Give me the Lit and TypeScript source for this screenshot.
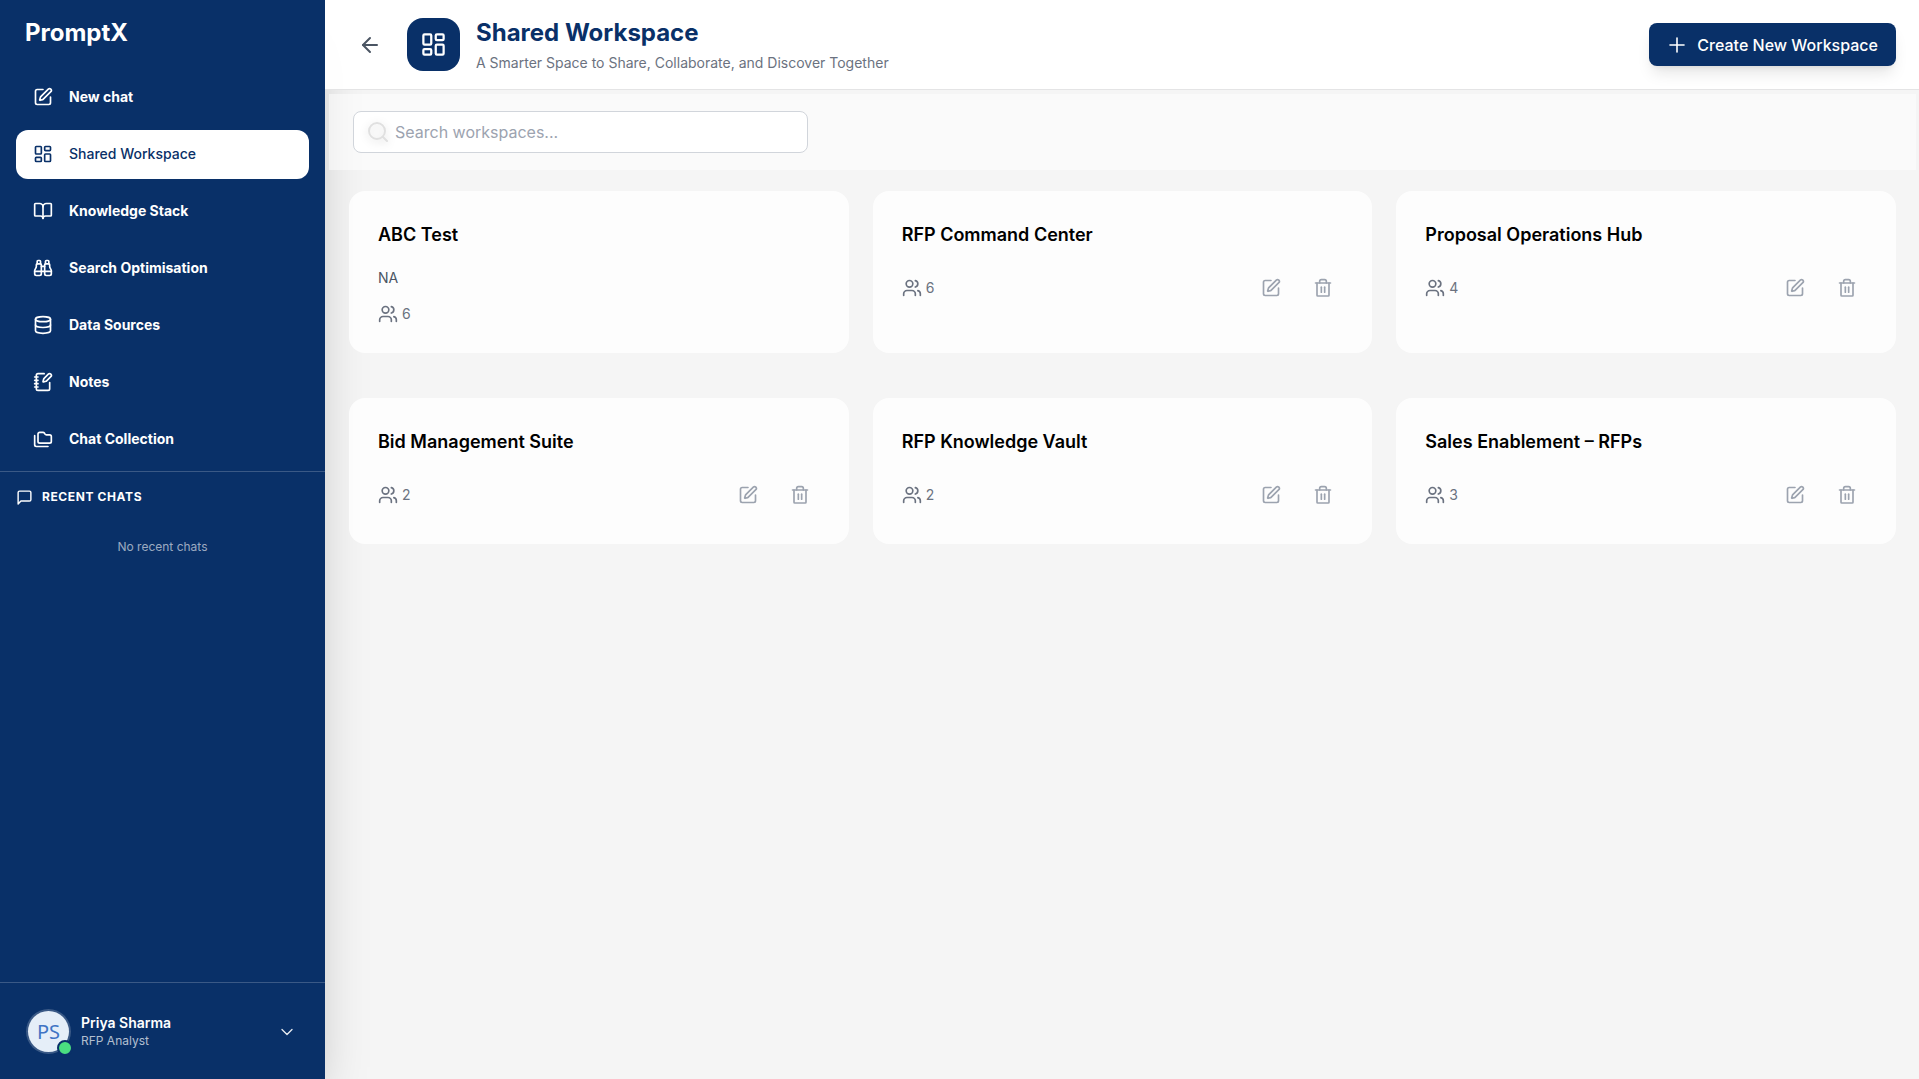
import { LitElement, html, css, svg, nothing, type SVGTemplateResult } from "lit";
import { customElement, property, state } from "lit/decorators.js";
import { classMap } from "lit/directives/class-map.js";

const ICONS: Record<string, SVGTemplateResult> = {
  edit: svg`<path d="M12 3H5a2 2 0 0 0-2 2v14a2 2 0 0 0 2 2h14a2 2 0 0 0 2-2v-7"/><path d="M18.375 2.625a1 1 0 0 1 3 3l-9.013 9.014a2 2 0 0 1-.853.505l-2.873.84a.5.5 0 0 1-.62-.62l.84-2.873a2 2 0 0 1 .506-.852z"/>`,
  dashboard: svg`<rect width="7" height="9" x="3" y="3" rx="1"/><rect width="7" height="5" x="14" y="3" rx="1"/><rect width="7" height="9" x="14" y="12" rx="1"/><rect width="7" height="5" x="3" y="16" rx="1"/>`,
  book: svg`<path d="M12 7v14"/><path d="M3 18a1 1 0 0 1-1-1V4a1 1 0 0 1 1-1h5a4 4 0 0 1 4 4 4 4 0 0 1 4-4h5a1 1 0 0 1 1 1v13a1 1 0 0 1-1 1h-6a3 3 0 0 0-3 3 3 3 0 0 0-3-3z"/>`,
  binoculars: svg`<path d="M10 10h4"/><path d="M19 7V4a1 1 0 0 0-1-1h-2a1 1 0 0 0-1 1v3"/><path d="M20 21a2 2 0 0 0 2-2v-3.851c0-1.39-2-2.962-2-4.829V8a1 1 0 0 0-1-1h-4a1 1 0 0 0-1 1v11a2 2 0 0 0 2 2z"/><path d="M22 16H2"/><path d="M4 21a2 2 0 0 1-2-2v-3.851c0-1.39 2-2.962 2-4.829V8a1 1 0 0 1 1-1h4a1 1 0 0 1 1 1v11a2 2 0 0 1-2 2z"/><path d="M9 7V4a1 1 0 0 0-1-1H6a1 1 0 0 0-1 1v3"/>`,
  database: svg`<ellipse cx="12" cy="5" rx="9" ry="3"/><path d="M3 5V19A9 3 0 0 0 21 19V5"/><path d="M3 12A9 3 0 0 0 21 12"/>`,
  notebook: svg`<path d="M13.4 2H6a2 2 0 0 0-2 2v16a2 2 0 0 0 2 2h12a2 2 0 0 0 2-2v-7.4"/><path d="M2 6h4"/><path d="M2 10h4"/><path d="M2 14h4"/><path d="M2 18h4"/><path d="M21.378 5.626a1 1 0 1 0-3.004-3.004l-5.01 5.012a2 2 0 0 0-.506.854l-.837 2.87a.5.5 0 0 0 .62.62l2.87-.837a2 2 0 0 0 .854-.506z"/>`,
  folders: svg`<path d="M20 17a2 2 0 0 0 2-2V9a2 2 0 0 0-2-2h-3.9a2 2 0 0 1-1.69-.9l-.81-1.2a2 2 0 0 0-1.67-.9H8a2 2 0 0 0-2 2v9a2 2 0 0 0 2 2Z"/><path d="M2 8v11a2 2 0 0 0 2 2h14"/>`,
  message: svg`<path d="M21 15a2 2 0 0 1-2 2H7l-4 4V5a2 2 0 0 1 2-2h14a2 2 0 0 1 2 2z"/>`,
  chevron: svg`<path d="m6 9 6 6 6-6"/>`,
  back: svg`<path d="m12 19-7-7 7-7"/><path d="M19 12H5"/>`,
  plus: svg`<path d="M5 12h14"/><path d="M12 5v14"/>`,
  search: svg`<circle cx="11" cy="11" r="8"/><path d="m21 21-4.3-4.3"/>`,
  users: svg`<path d="M16 21v-2a4 4 0 0 0-4-4H6a4 4 0 0 0-4 4v2"/><circle cx="9" cy="7" r="4"/><path d="M22 21v-2a4 4 0 0 0-3-3.87"/><path d="M16 3.13a4 4 0 0 1 0 7.75"/>`,
  trash: svg`<path d="M3 6h18"/><path d="M19.2 6v14.6a1 1 0 0 1-1 1H5.8a1 1 0 0 1-1-1V6"/><path d="M8 6V4a2 2 0 0 1 2-2h4a2 2 0 0 1 2 2v2"/><path d="M10 11v6"/><path d="M14 11v6"/>`,
};

@customElement("px-icon")
export class PxIcon extends LitElement {
  @property() name = "";
  static styles = css`
    :host {
      display: inline-flex;
      flex: none;
      width: 20px;
      height: 20px;
    }
    .glyph {
      width: 100%;
      height: 100%;
      fill: none;
      stroke: currentColor;
      stroke-width: var(--stroke, 2);
      stroke-linecap: round;
      stroke-linejoin: round;
    }
  `;
  render() {
    return html`<svg class="glyph" viewBox="0 0 24 24" aria-hidden="true">${ICONS[this.name]}</svg>`;
  }
}

const NAV = [
  { label: "New chat", icon: "edit" },
  { label: "Shared Workspace", icon: "dashboard", active: true },
  { label: "Knowledge Stack", icon: "book" },
  { label: "Search Optimisation", icon: "binoculars" },
  { label: "Data Sources", icon: "database" },
  { label: "Notes", icon: "notebook" },
  { label: "Chat Collection", icon: "folders" },
];

@customElement("px-sidebar")
export class PxSidebar extends LitElement {
  static styles = css`
    :host {
      display: flex;
      flex-direction: column;
      background: #093068;
      color: #fff;
      box-shadow: 0 25px 50px -12px rgba(0, 0, 0, 0.25);
    }
    .brand {
      padding: 17px 25px 15px;
      font-size: 24px;
      line-height: 32px;
      font-weight: 700;
    }
    .nav {
      display: flex;
      flex-direction: column;
      gap: 8px;
      padding: 9px 16px 7px;
      border-bottom: 1px solid rgba(255, 255, 255, 0.2);
    }
    .item {
      display: flex;
      align-items: center;
      gap: 16px;
      box-sizing: border-box;
      height: 49px;
      padding: 0 17px 2px;
      border-radius: 12px;
      color: #fff;
      font-size: 14px;
      font-weight: 700;
      text-decoration: none;
    }
    .active {
      background: #fff;
      color: #093068;
      font-weight: 500;
    }
    .recent {
      flex: 1;
      padding: 16px;
    }
    .heading {
      display: flex;
      align-items: center;
      gap: 9px;
      margin: 0;
      font-size: 12px;
      line-height: 18px;
      font-weight: 700;
      letter-spacing: 0.05em;
    }
    .heading px-icon {
      width: 17px;
      height: 17px;
    }
    .empty {
      margin: 32px 0 0;
      text-align: center;
      font-size: 12px;
      line-height: 18px;
      color: rgba(255, 255, 255, 0.6);
    }
    .user {
      display: flex;
      align-items: center;
      gap: 12px;
      padding: 25px 28px 24px;
      border: 0;
      border-top: 1px solid rgba(255, 255, 255, 0.2);
      background: none;
      color: inherit;
      font: inherit;
      text-align: left;
    }
    .avatar {
      position: relative;
      display: grid;
      place-items: center;
      width: 41px;
      height: 41px;
      margin: 3px 0;
      border-radius: 50%;
      background: #e5eef8;
      box-shadow: 0 0 0 2px rgba(255, 255, 255, 0.2);
      color: #3f74c4;
      font-family: "Noto Sans", sans-serif;
      font-size: 20px;
    }
    .status {
      position: absolute;
      right: -4px;
      bottom: -4px;
      width: 12px;
      height: 12px;
      border: 2px solid #093068;
      border-radius: 50%;
      background: #4ade80;
    }
    .who {
      flex: 1;
      display: flex;
      flex-direction: column;
    }
    .name {
      font-size: 14px;
      line-height: 18px;
      font-weight: 600;
    }
    .role {
      font-size: 12px;
      line-height: 18px;
      color: rgba(255, 255, 255, 0.7);
    }
    .user > px-icon {
      --stroke: 1.6;
      color: rgba(255, 255, 255, 0.9);
    }
  `;
  render() {
    return html`
      <div class="brand">PromptX</div>
      <nav class="nav">
        ${NAV.map(
          (n) => html`<a class=${classMap({ item: true, active: !!n.active })} href="#" aria-current=${n.active ? "page" : nothing}>
            <px-icon name=${n.icon}></px-icon>${n.label}
          </a>`
        )}
      </nav>
      <section class="recent">
        <h2 class="heading"><px-icon name="message"></px-icon>RECENT CHATS</h2>
        <p class="empty">No recent chats</p>
      </section>
      <button class="user" type="button">
        <span class="avatar">PS<span class="status"></span></span>
        <span class="who"><span class="name">Priya Sharma</span><span class="role">RFP Analyst</span></span>
        <px-icon name="chevron"></px-icon>
      </button>
    `;
  }
}

interface Workspace {
  title: string;
  members: number;
  note?: string;
  editable: boolean;
}

@customElement("px-card")
export class PxCard extends LitElement {
  @property({ attribute: false }) item!: Workspace;
  static styles = css`
    :host {
      display: block;
      padding: 29px 31px 29px 29px;
      border-radius: 16px;
      background: rgba(255, 255, 255, 0.8);
    }
    .title {
      margin: 0;
      font-size: 18px;
      line-height: 30px;
      font-weight: 600;
      color: #000;
    }
    .note {
      margin: 16px 0 0;
      font-size: 14px;
      line-height: 24px;
      color: #4b5563;
    }
    .row {
      display: flex;
      align-items: center;
      justify-content: space-between;
      margin-top: 18px;
      min-height: 40px;
    }
    .note + .row {
      margin-top: 14px;
      min-height: 20px;
    }
    .members {
      display: flex;
      align-items: center;
      gap: 4px;
      font-size: 14px;
      line-height: 20px;
      color: #6b7280;
    }
    .actions {
      display: flex;
      gap: 16px;
    }
    .action {
      display: grid;
      place-items: center;
      width: 36px;
      height: 36px;
      padding: 0;
      border: 0;
      background: none;
      color: #9ca3af;
    }
  `;
  render() {
    const w = this.item;
    return html`
      <h2 class="title">${w.title}</h2>
      ${w.note ? html`<p class="note">${w.note}</p>` : nothing}
      <div class="row">
        <span class="members"><px-icon name="users"></px-icon>${w.members}</span>
        ${w.editable
          ? html`<span class="actions">
              <button class="action" type="button" aria-label="Edit ${w.title}"><px-icon name="edit"></px-icon></button>
              <button class="action" type="button" aria-label="Delete ${w.title}"><px-icon name="trash"></px-icon></button>
            </span>`
          : nothing}
      </div>
    `;
  }
}

@customElement("app-root")
export class AppRoot extends LitElement {
  @state() private query = "";
  private items: Workspace[] = [
    { title: "ABC Test", members: 6, note: "NA", editable: false },
    { title: "RFP Command Center", members: 6, editable: true },
    { title: "Proposal Operations Hub", members: 4, editable: true },
    { title: "Bid Management Suite", members: 2, editable: true },
    { title: "RFP Knowledge Vault", members: 2, editable: true },
    { title: "Sales Enablement – RFPs", members: 3, editable: true },
  ];
  static styles = css`
    :host {
      display: grid;
      grid-template-columns: 325px minmax(0, 1fr);
      min-height: 100vh;
      background: #f5f5f5;
      font-family: Inter, "Liberation Sans", sans-serif;
    }
    .main {
      position: relative;
      min-width: 0;
    }
    .top {
      display: flex;
      align-items: center;
      gap: 16px;
      height: 89px;
      padding: 0 23px 0 24px;
      border-bottom: 1px solid #e4e4e5;
      background: rgba(255, 255, 255, 0.95);
    }
    .back {
      display: grid;
      place-items: center;
      width: 42px;
      height: 42px;
      padding: 0;
      border: 0;
      background: none;
      color: #4b5563;
    }
    .back px-icon,
    .create px-icon,
    .glass {
      width: 24px;
      height: 24px;
    }
    .badge {
      display: grid;
      place-items: center;
      width: 53px;
      height: 53px;
      border-radius: 16px;
      background: #093068;
      color: #fff;
    }
    .badge px-icon {
      width: 27px;
      height: 27px;
    }
    .titles {
      flex: 1;
    }
    .title {
      margin: 0;
      font-size: 24px;
      line-height: 32px;
      font-weight: 700;
      color: #093068;
    }
    .sub {
      margin: 4px 0 0;
      font-size: 14px;
      line-height: 20px;
      color: #6b7280;
    }
    .create {
      display: flex;
      align-items: center;
      gap: 8px;
      height: 43px;
      padding: 0 18px 0 16px;
      border: 0;
      border-radius: 8px;
      background: #093068;
      box-shadow: 0 10px 15px -3px rgba(0, 0, 0, 0.1), 0 4px 6px -4px rgba(0, 0, 0, 0.1);
      color: #fff;
      font: 500 16px/24px Inter, sans-serif;
    }
    .create px-icon {
      --stroke: 1.6;
    }
    .bar {
      margin: 4px 3px 0 4px;
      padding: 17px 24px;
      background: rgba(255, 255, 255, 0.5);
    }
    .field {
      display: flex;
      align-items: center;
      gap: 5px;
      box-sizing: border-box;
      width: 455px;
      max-width: 100%;
      height: 42px;
      padding: 0 12px;
      border: 1px solid #d1d5db;
      border-radius: 8px;
      background: #fff;
    }
    .glass {
      color: #e0e0e0;
      filter: drop-shadow(0 2px 4px rgba(0, 0, 0, 0.16));
    }
    .input {
      flex: 1;
      min-width: 0;
      padding: 0;
      border: 0;
      outline: 0;
      background: none;
      font: 400 16px/24px Inter, sans-serif;
      color: #111827;
    }
    .input::placeholder {
      color: #9ca3af;
    }
    .cards {
      display: grid;
      grid-template-columns: repeat(3, minmax(0, 1fr));
      gap: 45px 24px;
      padding: 21px 23px 24px 24px;
    }
  `;
  render() {
    const q = this.query.toLowerCase();
    return html`
      <px-sidebar></px-sidebar>
      <main class="main">
        <header class="top">
          <button class="back" type="button" aria-label="Back"><px-icon name="back"></px-icon></button>
          <span class="badge"><px-icon name="dashboard"></px-icon></span>
          <div class="titles">
            <h1 class="title">Shared Workspace</h1>
            <p class="sub">A Smarter Space to Share, Collaborate, and Discover Together</p>
          </div>
          <button class="create" type="button"><px-icon name="plus"></px-icon>Create New Workspace</button>
        </header>
        <div class="bar">
          <label class="field">
            <px-icon class="glass" name="search"></px-icon>
            <input
              class="input"
              type="text"
              aria-label="Search workspaces"
              placeholder="Search workspaces..."
              .value=${this.query}
              @input=${(e: Event) => (this.query = (e.target as HTMLInputElement).value)}
            />
          </label>
        </div>
        <div class="cards">
          ${this.items
            .filter((w) => w.title.toLowerCase().includes(q))
            .map((w) => html`<px-card .item=${w}></px-card>`)}
        </div>
      </main>
    `;
  }
}
